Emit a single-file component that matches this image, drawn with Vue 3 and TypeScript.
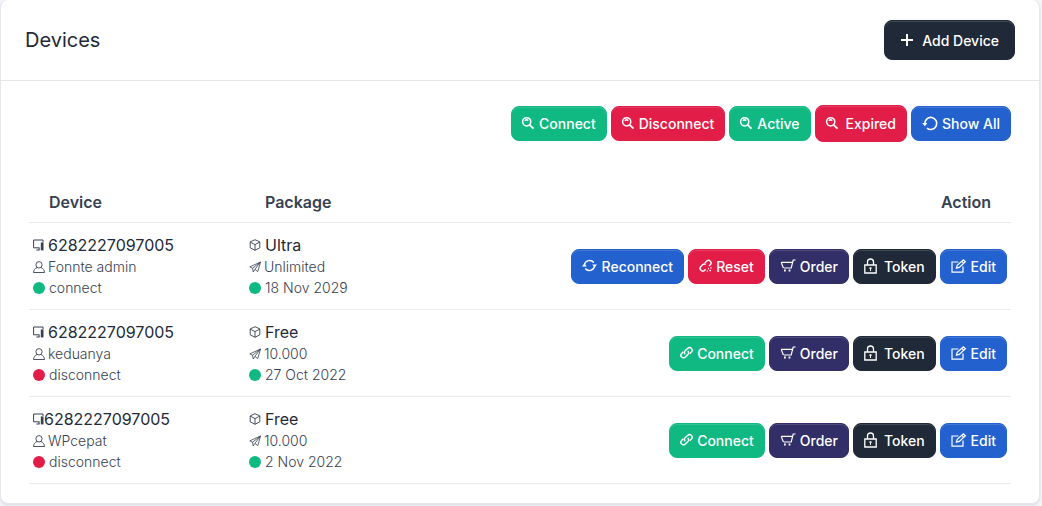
<script setup lang="ts">
import { h, type FunctionalComponent } from 'vue'

type IconName =
  | 'plus' | 'search' | 'reload' | 'sync' | 'unlink' | 'link' | 'cart'
  | 'lock' | 'edit' | 'device' | 'user' | 'cube' | 'plane'

interface Glyph { w: number; h: number; d: string; fill?: string; stroke?: number }

const glyphs: Record<IconName, Glyph> = {
  plus: { w: 14, h: 14, d: 'M7 1v12M1 7h12', stroke: 2 },
  search: { w: 12, h: 14, d: 'M4.7 .7a4.1 4.1 0 1 0 0 8.2a4.1 4.1 0 1 0 0-8.2M2.8 3.7C3.6 2.9 5.2 2.7 6.4 3.5', fill: 'M7 8.4l1.2-1.2l4 3.7l-1.3 1.4z', stroke: 1.5 },
  reload: { w: 15, h: 16, d: 'M2.8 8a6 6 0 1 1 2.2 4.1', fill: 'M0 7h5.4L2.8 10.2z', stroke: 1.6 },
  sync: { w: 15, h: 14, d: 'M2.4 6a5.3 5.3 0 0 1 9.4-2.5M12.6 7a5.3 5.3 0 0 1-9.4 2.5', fill: 'M0 7.4L2.4 4.6l2.4 2.8zM10.2 5.6H15L12.6 8.4z', stroke: 1.4 },
  unlink: { w: 13, h: 14, d: 'M5.8 4l2-2a2.6 2.6 0 0 1 3.7 3.6L10 7.1M6.4 10.2a2.6 2.6 0 0 1-4.6.8a2.6 2.6 0 0 1 .1-3.6l1.9-1.9a2.5 2.5 0 0 1 2.8 0M9 9.5l.8.2M11.4 8.8l1 .2M8.4 11.4v1.2M10.7 11l1 1', stroke: 1.4 },
  link: { w: 13, h: 14, d: 'M5.2 8.3a2.6 2.6 0 0 1 .1-3.7l2.3-2.2a2.6 2.6 0 0 1 3.8 3.6L9.6 7.7M7.8 5.1a2.6 2.6 0 0 1-.1 3.7L5.4 11a2.6 2.6 0 0 1-3.8-3.6L3.4 5.7', stroke: 1.4 },
  cart: { w: 16, h: 14, d: 'M15.6 1h-2.4l-2 8H3.8M1.2 3.4h11.2M1.2 3.4l2.2 5.6', fill: 'M4 10.6h1.8v1.8H4zM8.6 10.6h1.8v1.8H8.6z', stroke: 1.2 },
  lock: { w: 13, h: 17, d: 'M.8 7h11.4v8H.8zM3.5 7V4a3 3 0 0 1 6 0v3', fill: 'M5.5 9.2h2v1.8H7v2H6v-2h-.5z', stroke: 1.3 },
  edit: { w: 15, h: 15, d: 'M7.4 3H1v10.2h11V7.6M5.4 9.2l.8-2.9l6.2-5.5l2 2l-6.1 5.6zM10.8 2.3l2 2', stroke: 1.2 },
  device: { w: 11, h: 12, d: 'M10 3V1H.6v7.8h6M3.4 11h3.2M6 9v2', fill: 'M7.8 3.4h2.7v8H7.8z', stroke: 1 },
  user: { w: 12, h: 12, d: 'M6 .6a3.1 3.2 0 1 0 0 6.4a3.1 3.2 0 1 0 0-6.4M4.2 6.5C2 7.3.7 9 .5 11.5h11C11.3 9 10 7.3 7.8 6.5', stroke: 0.9 },
  cube: { w: 12, h: 12, d: 'M6 .7l4.8 2.2v5.9L6 11.3L1.2 8.8V2.9zM1.2 3.1L6 5.6l4.8-2.5M6 5.6v5.7', stroke: 0.9 },
  plane: { w: 12, h: 12, d: 'M11.5 1L.8 5.9l2.8 1.3l.6 3.8l1.7-2.6l2.9 2.2zM3.6 7.2L11.5 1L5.9 8.4', stroke: 0.8 },
}

const Icon: FunctionalComponent<{ name: IconName }> = ({ name }) => {
  const g = glyphs[name]
  return h('svg', { width: g.w, height: g.h, viewBox: `0 0 ${g.w} ${g.h}`, 'aria-hidden': 'true' }, [
    h('path', { d: g.d, fill: 'none', stroke: 'currentColor', 'stroke-width': g.stroke }),
    g.fill ? h('path', { d: g.fill, fill: 'currentColor' }) : null,
  ])
}
Icon.props = ['name']

type Tone = 'green' | 'red' | 'blue' | 'navy' | 'dark'
interface Action { label: string; icon: IconName; tone: Tone; narrow?: boolean; tall?: boolean }
interface Device {
  number: string
  tight?: boolean
  owner: string
  connected: boolean
  plan: string
  quota: string
  expires: string
}

const filters: Action[] = [
  { label: 'Connect', icon: 'search', tone: 'green', narrow: true },
  { label: 'Disconnect', icon: 'search', tone: 'red', narrow: true },
  { label: 'Active', icon: 'search', tone: 'green', narrow: true },
  { label: 'Expired', icon: 'search', tone: 'red', tall: true },
  { label: 'Show All', icon: 'reload', tone: 'blue' },
]

const devices: Device[] = [
  { number: '6282227097005', owner: 'Fonnte admin', connected: true, plan: 'Ultra', quota: 'Unlimited', expires: '18 Nov 2029' },
  { number: '6282227097005', owner: 'keduanya', connected: false, plan: 'Free', quota: '10.000', expires: '27 Oct 2022' },
  { number: '6282227097005', tight: true, owner: 'WPcepat', connected: false, plan: 'Free', quota: '10.000', expires: '2 Nov 2022' },
]

const common: Action[] = [
  { label: 'Order', icon: 'cart', tone: 'navy' },
  { label: 'Token', icon: 'lock', tone: 'dark' },
  { label: 'Edit', icon: 'edit', tone: 'blue' },
]

function actionsFor(device: Device): Action[] {
  return device.connected
    ? [
        { label: 'Reconnect', icon: 'sync', tone: 'blue' },
        { label: 'Reset', icon: 'unlink', tone: 'red', narrow: true },
        ...common,
      ]
    : [{ label: 'Connect', icon: 'link', tone: 'green', narrow: true }, ...common]
}
</script>

<template>
  <main class="card">
    <header class="card-header">
      <h1>Devices</h1>
      <button type="button" class="btn dark add"><Icon name="plus" />Add Device</button>
    </header>
    <section class="card-body">
      <div class="filters">
        <button v-for="f in filters" :key="f.label" type="button" class="btn" :class="[f.tone, { tall: f.tall }]">
          <span class="glyph" :class="{ narrow: f.narrow }"><Icon :name="f.icon" /></span>{{ f.label }}
        </button>
      </div>
      <table>
        <thead>
          <tr>
            <th class="narrow-col">Device</th>
            <th class="narrow-col">Package</th>
            <th class="right">Action</th>
          </tr>
        </thead>
        <tbody>
          <tr v-for="(d, i) in devices" :key="i">
            <td>
              <div class="line main" :class="{ tight: d.tight }"><Icon name="device" /><span>{{ d.number }}</span></div>
              <div class="line"><Icon name="user" /><span>{{ d.owner }}</span></div>
              <div class="line status">
                <i class="dot" :class="d.connected ? 'green' : 'red'"></i><span>{{ d.connected ? 'connect' : 'disconnect' }}</span>
              </div>
            </td>
            <td>
              <div class="line main"><Icon name="cube" /><span>{{ d.plan }}</span></div>
              <div class="line"><Icon name="plane" /><span>{{ d.quota }}</span></div>
              <div class="line status"><i class="dot green"></i><span>{{ d.expires }}</span></div>
            </td>
            <td>
              <div class="actions">
                <button v-for="a in actionsFor(d)" :key="a.label" type="button" class="btn" :class="a.tone">
                  <span class="glyph" :class="{ narrow: a.narrow }"><Icon :name="a.icon" /></span>{{ a.label }}
                </button>
              </div>
            </td>
          </tr>
        </tbody>
      </table>
    </section>
  </main>
</template>

<style>
body {
  background: #f2f4f7;
}
</style>

<style scoped>
.card {
  margin: 0 2px 2px 0;
  border: 1px solid #e5e7eb;
  border-top: 0;
  border-radius: 8px;
  background: #fff;
  box-shadow: 0 1px 2px rgba(31, 41, 55, 0.12);
  color: #1f2937;
  font-family: Inter, "Liberation Sans", sans-serif;
  box-sizing: border-box;
}
.card-header {
  display: flex;
  align-items: center;
  justify-content: space-between;
  height: 80px;
  padding: 0 24px;
  border-bottom: 1px solid #e5e7eb;
}
h1 {
  margin: 0;
  font-size: 20px;
  font-weight: 400;
  line-height: 26px;
}
.card-body {
  padding: 24px 28px 19px;
}
.filters {
  display: flex;
  align-items: center;
  justify-content: flex-end;
  gap: 4px;
  margin-bottom: 39px;
}
.btn {
  display: inline-flex;
  align-items: center;
  gap: 5px;
  height: 35px;
  padding: 0 10px;
  border: 1px solid transparent;
  border-radius: 8px;
  box-shadow: inset 0 1px 0 rgba(255, 255, 255, 0.15);
  color: #fff;
  font: 500 14px/21px Inter, "Liberation Sans", sans-serif;
  white-space: nowrap;
  cursor: pointer;
}
.btn.tall {
  height: 37px;
}
.btn.add {
  height: 40px;
  padding: 0 15px;
  gap: 8px;
}
.glyph {
  display: flex;
  width: 15px;
}
.glyph.narrow {
  width: 12px;
}
svg {
  display: block;
  flex: none;
  overflow: visible;
}
.green { background-color: #10b981; border-color: #10b981; }
.red { background-color: #e11d48; border-color: #e11d48; }
.blue { background-color: #2361ce; border-color: #2361ce; }
.navy { background-color: #312e68; border-color: #312e68; }
.dark { background-color: #1f2937; border-color: #1f2937; }
table {
  width: 100%;
  border-collapse: separate;
  border-spacing: 0;
  table-layout: fixed;
}
th {
  height: 41px;
  padding: 0 20px;
  border-bottom: 1px solid #e9eaec;
  color: #374151;
  font-size: 16px;
  font-weight: 600;
  line-height: 24px;
  text-align: left;
}
.narrow-col {
  width: 176px;
}
th.right {
  text-align: right;
}
td {
  height: 86px;
  padding: 0 4px;
  border-bottom: 1px solid #e9eaec;
}
.line {
  display: flex;
  align-items: center;
  gap: 3px;
  height: 21px;
  color: #374151;
  font-size: 14px;
  font-weight: 300;
  line-height: 21px;
}
.line.main {
  gap: 4px;
  height: 22px;
  font-size: 16px;
  font-weight: 400;
  line-height: 22px;
}
.line.main span {
  color: #1f2937;
}
.line.tight {
  gap: 0;
}
.line.status {
  gap: 4px;
}
.dot {
  width: 12px;
  height: 12px;
  border-radius: 50%;
}
.actions {
  display: flex;
  justify-content: flex-end;
  gap: 4px;
}
</style>
